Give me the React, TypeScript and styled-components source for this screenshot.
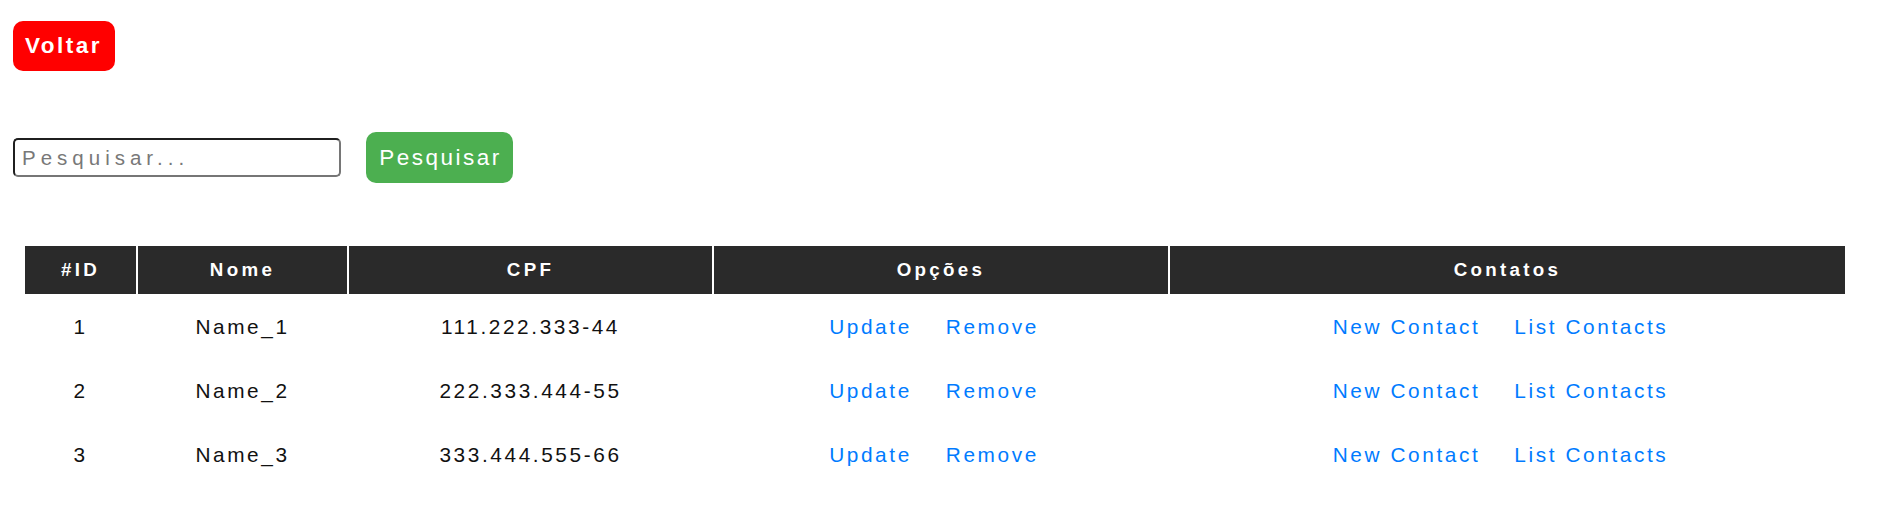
import styled, { createGlobalStyle } from "styled-components";

const GlobalStyle = createGlobalStyle`
  body {
    margin: 0;
    background: #ffffff;
    font-family: "Liberation Sans", Arial, sans-serif;
  }
`;

const Page = styled.div`
  padding: 21px 0 0 13px;
`;
const BackButton = styled.button`
  display: block;
  height: 50px;
  padding: 0 13px 0 12px;
  background-color: #ff0000;
  border: none;
  border-radius: 10px;
  color: #ffffff;
  font-family: "Liberation Sans", Arial, sans-serif;
  font-size: 22.5px;
  font-weight: bold;
  letter-spacing: 2.5px;
  cursor: pointer;
`;
const SearchBar = styled.form`
  display: flex;
  align-items: center;
  gap: 25px;
  margin-top: 61px;
`;
const SearchInput = styled.input`
  box-sizing: border-box;
  width: 328px;
  height: 39px;
  padding: 0 7px;
  border: 2px solid #767676;
  border-top-color: #1f1f1f;
  border-left-color: #1f1f1f;
  border-radius: 5px;
  font-family: "Liberation Sans", Arial, sans-serif;
  font-size: 20.5px;
  letter-spacing: 5px;
  &::placeholder {
    color: #787878;
  }
`;
const SearchButton = styled.button`
  box-sizing: border-box;
  width: 147px;
  height: 51px;
  padding: 0;
  background-color: #4caf50;
  border: none;
  border-radius: 10px;
  color: #ffffff;
  font-family: "Liberation Sans", Arial, sans-serif;
  font-size: 22.5px;
  letter-spacing: 2.5px;
  text-indent: 2px;
  cursor: pointer;
`;
const Table = styled.table`
  margin: 61px 0 0 10px;
  width: 1824px;
  table-layout: fixed;
  border-collapse: separate;
  border-spacing: 2px;
`;
const HeadCell = styled.th<{ $width: number }>`
  box-sizing: border-box;
  width: ${(p) => p.$width}px;
  height: 48px;
  padding: 0;
  background-color: #2a2a2a;
  color: #ffffff;
  font-size: 18.75px;
  font-weight: bold;
  letter-spacing: 3.3px;
  text-align: center;
`;
const Cell = styled.td`
  height: 62px;
  padding: 0;
  color: #111111;
  font-size: 20.8px;
  letter-spacing: 2.6px;
  text-align: center;
  vertical-align: middle;
`;
const Actions = styled.div`
  display: flex;
  justify-content: center;
  gap: 20px;
`;
const ActionLink = styled.a`
  margin-right: 14px;
  color: #007bff;
  text-decoration: none;
  cursor: pointer;
`;

const columns = [
  { label: "#ID", width: 111 },
  { label: "Nome", width: 209 },
  { label: "CPF", width: 363 },
  { label: "Opções", width: 454 },
  { label: "Contatos", width: 675 },
];

const clients = [
  { id: 1, name: "Name_1", cpf: "111.222.333-44" },
  { id: 2, name: "Name_2", cpf: "222.333.444-55" },
  { id: 3, name: "Name_3", cpf: "333.444.555-66" },
];

export default function App() {
  return (
    <>
      <GlobalStyle />
      <Page>
        <BackButton>Voltar</BackButton>
        <SearchBar onSubmit={(e) => e.preventDefault()}>
          <SearchInput placeholder="Pesquisar..." type={"text"} />
          <SearchButton type="submit">Pesquisar</SearchButton>
        </SearchBar>
        <Table>
          <thead>
            <tr>
              {columns.map((col) => (
                <HeadCell key={col.label} $width={col.width}>
                  {col.label}
                </HeadCell>
              ))}
            </tr>
          </thead>
          <tbody>
            {clients.map((client) => (
              <tr key={client.id}>
                <Cell>{client.id}</Cell>
                <Cell>{client.name}</Cell>
                <Cell>{client.cpf}</Cell>
                <Cell>
                  <Actions>
                    <ActionLink>Update</ActionLink>
                    <ActionLink>Remove</ActionLink>
                  </Actions>
                </Cell>
                <Cell>
                  <Actions>
                    <ActionLink>New Contact</ActionLink>
                    <ActionLink>List Contacts</ActionLink>
                  </Actions>
                </Cell>
              </tr>
            ))}
          </tbody>
        </Table>
      </Page>
    </>
  );
}
